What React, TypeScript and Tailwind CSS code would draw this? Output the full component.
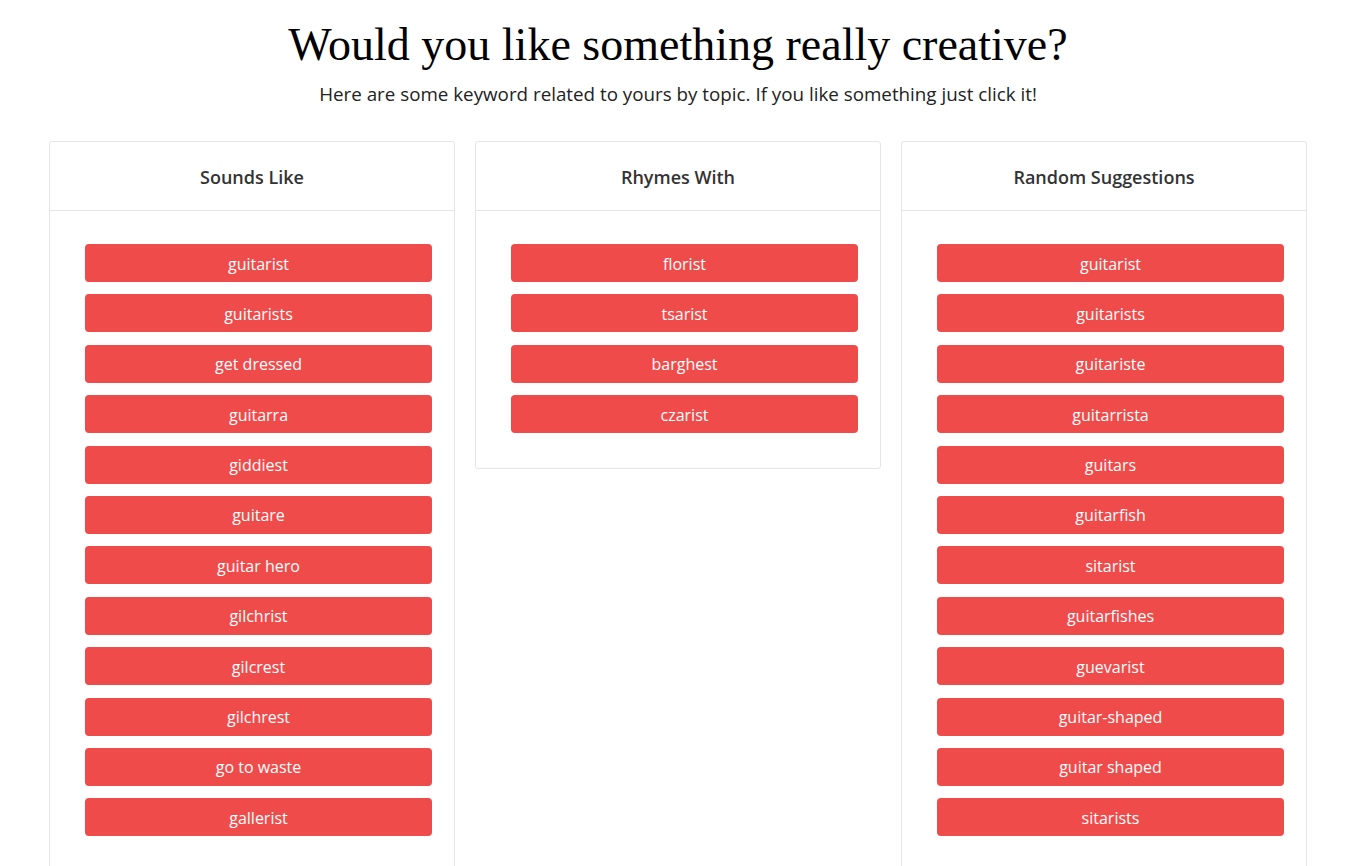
const columns = [
  {
    title: 'Sounds Like',
    words: [
      'guitarist',
      'guitarists',
      'get dressed',
      'guitarra',
      'giddiest',
      'guitare',
      'guitar hero',
      'gilchrist',
      'gilcrest',
      'gilchrest',
      'go to waste',
      'gallerist',
    ],
  },
  {
    title: 'Rhymes With',
    words: ['florist', 'tsarist', 'barghest', 'czarist'],
  },
  {
    title: 'Random Suggestions',
    words: [
      'guitarist',
      'guitarists',
      'guitariste',
      'guitarrista',
      'guitars',
      'guitarfish',
      'sitarist',
      'guitarfishes',
      'guevarist',
      'guitar-shaped',
      'guitar shaped',
      'sitarists',
    ],
  },
];

function KeywordCard({ title, words }: { title: string; words: string[] }) {
  return (
    <div className="rounded-[3px] border border-[#e6e6e6] bg-white">
      <div className="flex h-[69px] items-center justify-center border-b border-[#e6e6e6] pt-[2px] text-[18px] font-semibold text-[#333]">
        {title}
      </div>
      <ul className="flex flex-col gap-[12.4px] pt-[33px] pb-[35px] pl-[35px] pr-[22px]">
        {words.map((word) => (
          <li key={word}>
            <button className="flex h-[38px] w-full items-center justify-center rounded-[4px] bg-[#ef4b4a] pt-px text-[16px] text-white">
              {word}
            </button>
          </li>
        ))}
      </ul>
    </div>
  );
}

export default function App() {
  return (
    <div className="min-h-screen bg-white font-['Open_Sans',sans-serif] text-[#222]">
      <div className="mx-auto w-[1258px] pt-[18px]">
        <h1 className="text-center font-['Liberation_Serif',serif] text-[46px] leading-[54px] text-black">
          Would you like something really creative?
        </h1>
        <p className="mt-[10px] text-center text-[18.8px] leading-[24px]">
          Here are some keyword related to yours by topic. If you like something just click it!
        </p>
        <div className="mt-[35px] grid grid-cols-3 items-start gap-[20px]">
          {columns.map((col) => (
            <KeywordCard key={col.title} title={col.title} words={col.words} />
          ))}
        </div>
      </div>
    </div>
  );
}
